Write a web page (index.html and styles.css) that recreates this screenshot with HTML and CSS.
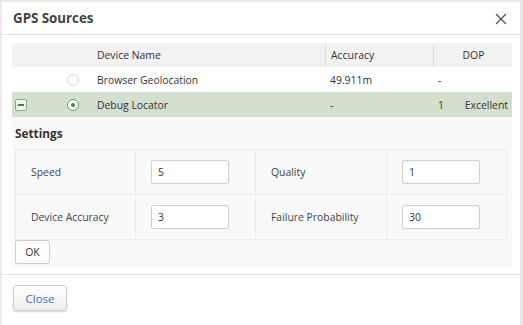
FILE: index.html
```html
<!DOCTYPE html>
<html lang="en">
<head>
    <meta charset="UTF-8">
    <title>GPS Sources</title>
    <link rel="stylesheet" href="styles.css">
</head>
<body>
    <div class="dialog">
        <div class="dialog-header">
            <h1>GPS Sources</h1>
            <span class="close-x">
                <svg width="12" height="12" viewBox="0 0 12 12"><path d="M1 1L11 11M11 1L1 11" stroke="#555" stroke-width="1.4" fill="none"/></svg>
            </span>
        </div>

        <div class="dialog-body">
            <div class="grid-row grid-head">
                <div></div>
                <div></div>
                <div class="cell-name">Device Name</div>
                <div class="cell-acc sep">Accuracy</div>
                <div class="cell-dop sep center">DOP</div>
            </div>
            <div class="grid-row">
                <div></div>
                <div class="cell-radio"><span class="radio"></span></div>
                <div class="cell-name">Browser Geolocation</div>
                <div class="cell-acc">49.911m</div>
                <div class="cell-dop"><span>-</span></div>
            </div>
            <div class="grid-row selected">
                <div class="cell-expand"><span class="expander"></span></div>
                <div class="cell-radio"><span class="radio checked"></span></div>
                <div class="cell-name">Debug Locator</div>
                <div class="cell-acc">-</div>
                <div class="cell-dop"><span>1</span><span>Excellent</span></div>
            </div>

            <div class="settings">
                <h2>Settings</h2>
                <table class="settings-table">
                    <tr>
                        <td class="lbl">Speed</td>
                        <td class="val"><input type="text" value="5"></td>
                        <td class="lbl wide">Quality</td>
                        <td class="val"><input type="text" value="1"></td>
                    </tr>
                    <tr>
                        <td class="lbl">Device Accuracy</td>
                        <td class="val"><input type="text" value="3"></td>
                        <td class="lbl wide">Failure Probability</td>
                        <td class="val"><input type="text" value="30"></td>
                    </tr>
                </table>
                <button class="btn-ok">OK</button>
            </div>
        </div>

        <div class="dialog-footer">
            <button class="btn-close">Close</button>
        </div>
    </div>
</body>
</html>
```

FILE: styles.css
```css
body {
    margin: 0;
    background-color: #e9e9e9;
    font-family: 'Open Sans', sans-serif;
    font-size: 10.4px;
    color: #333;
}
.dialog {
    background-color: #ffffff;
    margin: 2px 3px 0 2px;
    height: 330px;
}
.dialog-header {
    height: 32px;
    display: flex;
    align-items: center;
    justify-content: space-between;
    padding: 0 13px 0 11px;
    border-bottom: 1px solid #e2e2e2;
}
.dialog-header h1 {
    margin: 0;
    font-size: 13.3px;
    font-weight: bold;
    color: #444;
}
.close-x {
    display: flex;
    margin-top: 2px;
}
.dialog-body {
    padding: 8px 8px 0 10px;
}
.grid-row {
    display: grid;
    grid-template-columns: 48px 26px 239px 108px 79px;
    height: 25px;
    align-items: center;
}
.grid-row > div {
    height: 100%;
    display: flex;
    align-items: center;
    box-sizing: border-box;
}
.grid-head {
    height: 24px;
    background-color: #f2f2f2;
}
.grid-head .sep {
    border-left: 1px solid #dddddd;
}
.cell-name {
    padding-left: 11px;
}
.cell-acc {
    padding-left: 5px;
}
.cell-dop {
    padding: 0 4px 0 5px;
    justify-content: space-between;
}
.center {
    justify-content: center;
}
.cell-radio,
.cell-expand {
    justify-content: center;
}
.cell-expand {
    justify-content: flex-start;
    padding-left: 3px;
}
.selected {
    background-color: #d3dfcf;
}
.radio {
    width: 12px;
    height: 12px;
    border: 1px solid #d6d6d6;
    border-radius: 50%;
    background-color: #fff;
    box-sizing: border-box;
    position: relative;
}
.radio.checked {
    border-color: #5d9c5b;
}
.radio.checked::after {
    content: "";
    position: absolute;
    left: 3px;
    top: 3px;
    width: 4px;
    height: 4px;
    border-radius: 50%;
    background-color: #3c8a3c;
}
.expander {
    width: 12px;
    height: 12px;
    border: 1px solid #86ad80;
    border-radius: 2px;
    background-color: #eef3ec;
    box-sizing: border-box;
    position: relative;
}
.expander::after {
    content: "";
    position: absolute;
    left: 2px;
    right: 2px;
    top: 4px;
    height: 2px;
    background-color: #4f7a4a;
}
.settings {
    background-color: #f9f9f9;
    padding: 0 5px 4px 3px;
}
.settings h2 {
    margin: 0;
    font-size: 11.8px;
    font-weight: bold;
    line-height: 32px;
    color: #333;
}
.settings-table {
    width: 492px;
    border-collapse: collapse;
}
.settings-table td {
    border: 1px solid #ebebeb;
    height: 45px;
    padding: 0 0 0 15px;
    box-sizing: border-box;
    color: #444;
}
.settings-table .lbl {
    width: 120px;
}
.settings-table .lbl.wide {
    width: 131px;
}
.settings-table .val {
    width: 120px;
}
.settings-table input {
    width: 78px;
    height: 24px;
    border: 1px solid #cfcfcf;
    border-radius: 2px;
    padding: 0 6px;
    box-sizing: border-box;
    font-family: 'Open Sans', sans-serif;
    font-size: 10.4px;
    color: #333;
    display: block;
}
.btn-ok {
    display: block;
    width: 35px;
    height: 24px;
    padding: 0;
    background-color: #fff;
    border: 1px solid #cccccc;
    border-radius: 2px;
    font-family: 'Open Sans', sans-serif;
    font-size: 10.4px;
    color: #333;
}
.dialog-footer {
    margin-top: 6px;
    border-top: 1px solid #e2e2e2;
    padding: 10px 11px;
}
.btn-close {
    width: 54px;
    height: 26px;
    padding: 0;
    background: linear-gradient(#ffffff, #eeeeee);
    border: 1px solid #cccccc;
    border-radius: 3px;
    box-shadow: 0 1px 2px rgba(0, 0, 0, 0.15);
    font-family: 'Open Sans', sans-serif;
    font-size: 11.5px;
    color: #3e6fc0;
}
```
